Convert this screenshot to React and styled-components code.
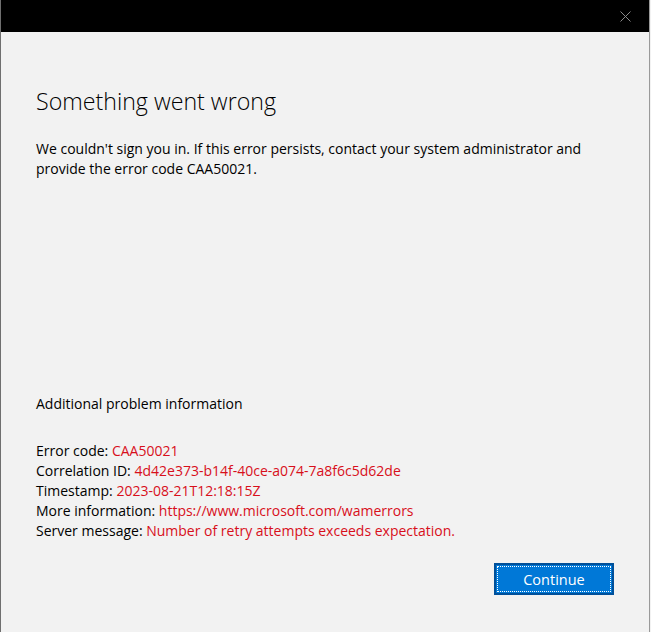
import React from "react";
import styled, { createGlobalStyle } from "styled-components";

const GlobalStyle = createGlobalStyle`
  html, body {
    margin: 0;
    padding: 0;
    background: #f2f2f2;
  }
  body {
    font-family: "Open Sans", "Noto Sans", "Liberation Sans", sans-serif;
  }
`;

const Window = styled.div`
  width: 650px;
  height: 632px;
  box-sizing: border-box;
  border-left: 1px solid #6f6f6f;
  border-right: 1px solid #9a9a9a;
  background: #f2f2f2;
  display: flex;
  flex-direction: column;
`;

const TitleBar = styled.div`
  height: 32px;
  background: #000;
  display: flex;
  justify-content: flex-end;
  align-items: center;
  padding-right: 14px;
`;

const CloseButton = styled.button`
  width: 20px;
  height: 20px;
  border: none;
  background: transparent;
  padding: 0;
  display: flex;
  align-items: center;
  justify-content: center;
`;

const Content = styled.div`
  flex: 1;
  display: flex;
  flex-direction: column;
  padding: 55px 35px 37px 35px;
  color: #000;
`;

const Heading = styled.h1`
  margin: 0;
  font-weight: 300;
  font-size: 23.2px;
  line-height: 28px;
`;

const Message = styled.p`
  margin: 24px 0 0;
  font-size: 14px;
  line-height: 20px;
`;

const Spacer = styled.div`
  flex: 1;
`;

const SectionTitle = styled.div`
  font-size: 14px;
  line-height: 20px;
`;

const InfoList = styled.div`
  margin-top: 27px;
  display: flex;
  flex-direction: column;
`;

const InfoRow = styled.div`
  font-size: 14px;
  line-height: 20px;
  white-space: nowrap;
`;

const Value = styled.span`
  color: #d80f1b;
`;

const Footer = styled.div`
  display: flex;
  justify-content: flex-end;
  margin-top: 22px;
`;

const PrimaryButton = styled.button`
  width: 120px;
  height: 32px;
  box-sizing: border-box;
  background: #0078d7;
  border: 2px solid #00509a;
  outline: 1px dotted #fff;
  outline-offset: -4px;
  color: #fff;
  font-family: inherit;
  font-size: 14.5px;
  padding: 0;
`;

const info = [
  ["Error code", "CAA50021"],
  ["Correlation ID", "4d42e373-b14f-40ce-a074-7a8f6c5d62de"],
  ["Timestamp", "2023-08-21T12:18:15Z"],
  ["More information", "https://www.microsoft.com/wamerrors"],
  ["Server message", "Number of retry attempts exceeds expectation."],
];

export default function App() {
  return (
    <>
      <GlobalStyle />
      <Window>
        <TitleBar>
          <CloseButton aria-label="Close">
            <svg width="11" height="11" viewBox="0 0 11 11">
              <path d="M0.5 0.5 L10.5 10.5 M10.5 0.5 L0.5 10.5" stroke="#8a8a8a" strokeWidth="1" />
            </svg>
          </CloseButton>
        </TitleBar>
        <Content>
          <Heading>Something went wrong</Heading>
          <Message>
            We couldn't sign you in. If this error persists, contact your system administrator and
            provide the error code CAA50021.
          </Message>
          <Spacer />
          <SectionTitle>Additional problem information</SectionTitle>
          <InfoList>
            {info.map(([label, value]) => (
              <InfoRow key={label}>
                {label}: <Value>{value}</Value>
              </InfoRow>
            ))}
          </InfoList>
          <Footer>
            <PrimaryButton>Continue</PrimaryButton>
          </Footer>
        </Content>
      </Window>
    </>
  );
}
